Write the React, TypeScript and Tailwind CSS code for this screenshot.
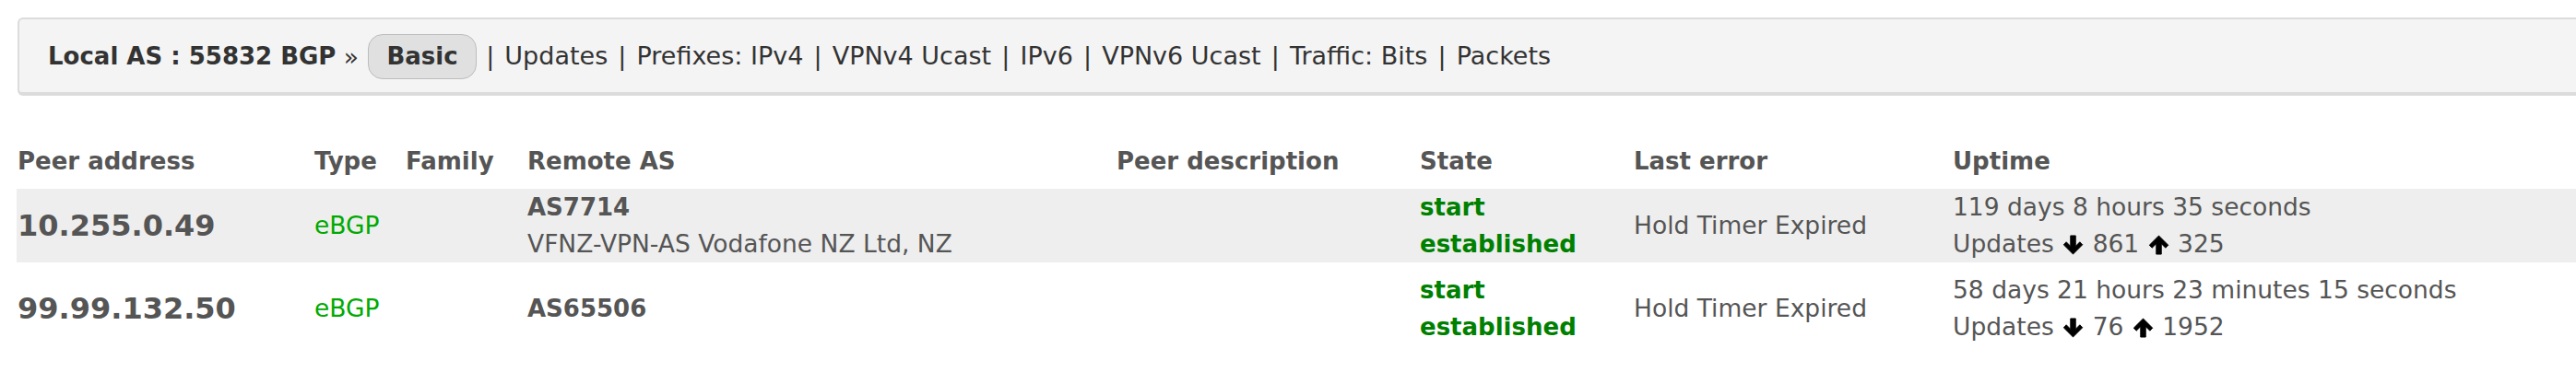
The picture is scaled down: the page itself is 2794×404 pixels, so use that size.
import React from 'react';

const font = "font-['DejaVu_Sans',Verdana,sans-serif]";

const ArrowDown = () => (
  <svg viewBox="0 0 24 24" className="inline-block w-[23px] h-[22px] align-[-3px] mx-[1px]">
    <path d="M9 1h6v12.5l5-5 3.2 3.2L12 22.9 0.8 11.7 4 8.5l5 5z" fill="#000" stroke="#000" strokeWidth="1" strokeLinejoin="round" />
  </svg>
);

const ArrowUp = () => (
  <svg viewBox="0 0 24 24" className="inline-block w-[23px] h-[22px] align-[-3px] mx-[1px]">
    <path d="M9 23h6V10.5l5 5 3.2-3.2L12 1.1 0.8 12.3 4 15.5l5-5z" fill="#000" stroke="#000" strokeWidth="1" strokeLinejoin="round" />
  </svg>
);

const Sep = () => <span className="px-[2.5px]">|</span>;

const cols = 'grid grid-cols-[322px_99px_132px_639px_329px_232px_346px_1fr] pl-[1px]';

type Peer = {
  address: string;
  asn: string;
  asName?: string;
  uptime: string;
  down: string;
  up: string;
};

const peers: Peer[] = [
  {
    address: '10.255.0.49',
    asn: 'AS7714',
    asName: 'VFNZ-VPN-AS Vodafone NZ Ltd, NZ',
    uptime: '119 days 8 hours 35 seconds',
    down: '861',
    up: '325',
  },
  {
    address: '99.99.132.50',
    asn: 'AS65506',
    uptime: '58 days 21 hours 23 minutes 15 seconds',
    down: '76',
    up: '1952',
  },
];

const links = ['Updates', 'Prefixes: IPv4', 'VPNv4 Ucast', 'IPv6', 'VPNv6 Ucast', 'Traffic: Bits', 'Packets'];

export default function App() {
  return (
    <div className={`${font} bg-white w-[2794px] h-[404px] overflow-hidden text-[26.5px]`}>
      <div className="pt-[19px] pl-[19px]">
        <div className="bg-[#f4f4f4] border-t-2 border-l-2 border-b-[4px] border-[#dcdcdc] rounded-l-[6px] pt-[16px] pb-[14px] pl-[31px] flex items-center text-[#333] whitespace-pre">
          <span className="font-bold text-[26px]">Local AS : 55832 BGP</span>
          <span> » </span>
          <span className="ml-[2px] mr-[8px] h-[49px] px-[19px] flex items-center bg-[#e0e0e0] border border-[#bdbdbd] rounded-[16px] font-bold text-[26px]">Basic</span>
          <span className="text-[27px]">
            {links.map((l) => (
              <React.Fragment key={l}>
                <Sep /> {l}{' '}
              </React.Fragment>
            ))}
          </span>
        </div>
      </div>

      <div className="mt-[51px] pl-[18px] flex flex-col gap-[10px] text-[#555]">
        <div className={`${cols} font-bold text-[26px] leading-[40px]`}>
          <div>Peer address</div>
          <div>Type</div>
          <div>Family</div>
          <div>Remote AS</div>
          <div>Peer description</div>
          <div>State</div>
          <div>Last error</div>
          <div>Uptime</div>
        </div>
        {peers.map((p, i) => (
          <div key={p.address} className={`${cols} leading-[40px] items-center ${i === 0 ? 'bg-[#eeeeee]' : ''}`}>
            <div className="font-bold text-[32px]">{p.address}</div>
            <div className="text-[#00aa00]">eBGP</div>
            <div></div>
            <div>
              <div className="font-bold text-[26px]">{p.asn}</div>
              {p.asName && <div>{p.asName}</div>}
            </div>
            <div></div>
            <div className="font-bold text-[26px] text-[#008000]">
              <div>start</div>
              <div>established</div>
            </div>
            <div>Hold Timer Expired</div>
            <div>
              <div>{p.uptime}</div>
              <div>
                Updates <ArrowDown /> {p.down} <ArrowUp /> {p.up}
              </div>
            </div>
          </div>
        ))}
      </div>
    </div>
  );
}
